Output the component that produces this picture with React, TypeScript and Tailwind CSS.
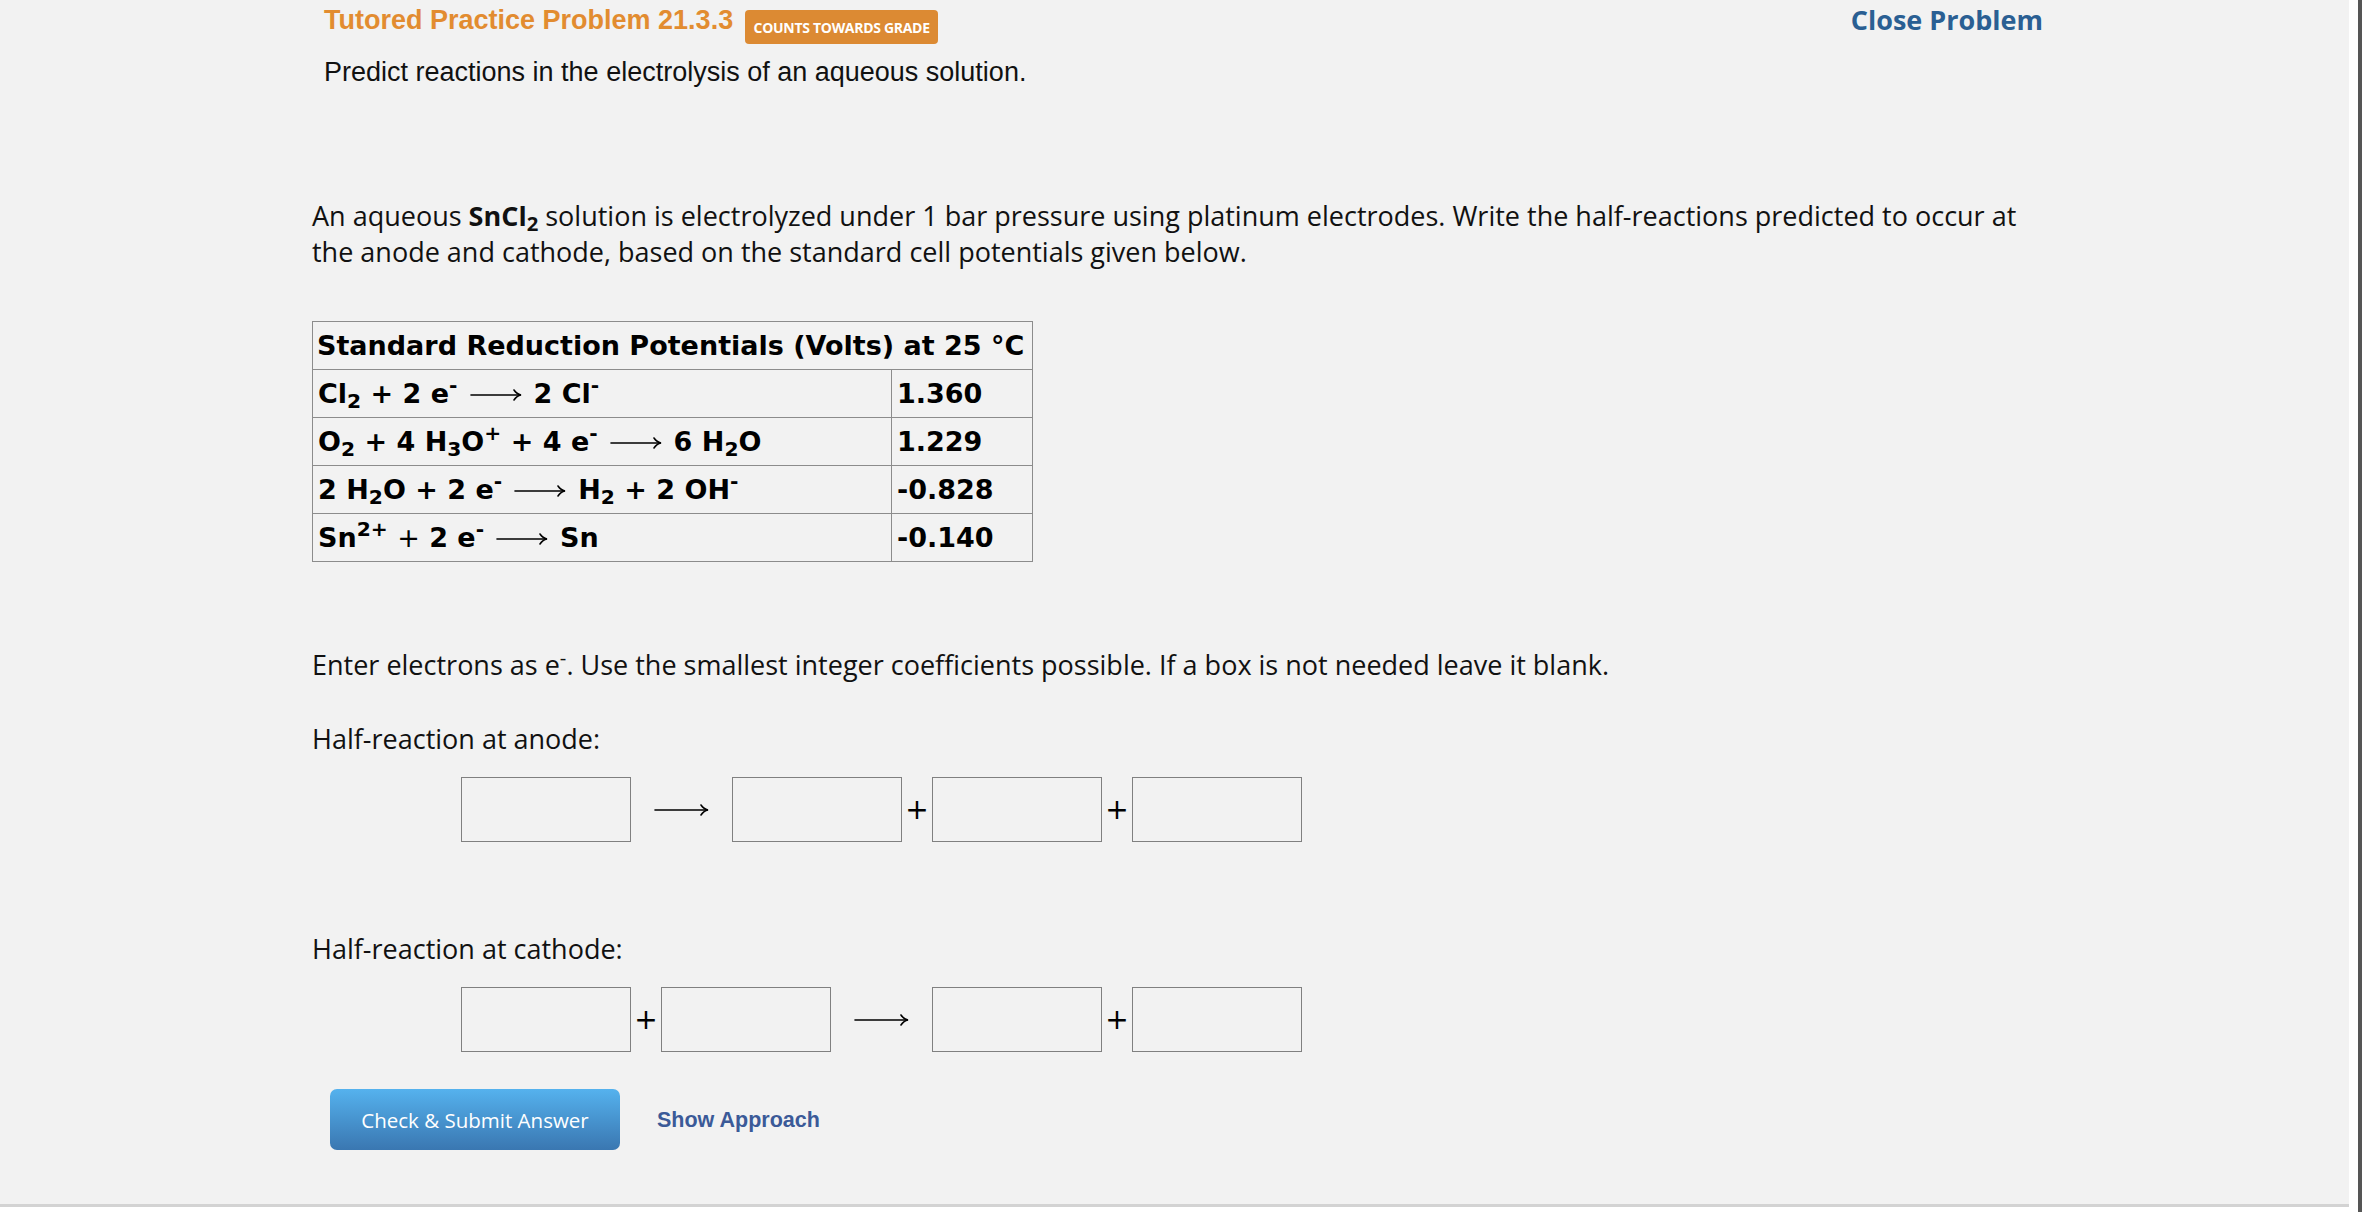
const ArrowSvg = ({ w }: { w: number }) => (
  <svg
    width={w}
    height={14}
    viewBox={`0 0 ${w} 14`}
    className="inline-block align-middle"
    fill="none"
    stroke="#000"
    strokeWidth={1.6}
    strokeLinecap="round"
  >
    <path d={`M1 7 H${w - 2}`} />
    <path d={`M${w - 8} 2 C${w - 6} 5 ${w - 4} 6.4 ${w - 1} 7 C${w - 4} 7.6 ${w - 6} 9 ${w - 8} 12`} />
  </svg>
);

const Arrow = () => (
  <span className="ml-[12px] mr-[12px]">
    <ArrowSvg w={52} />
  </span>
);

const rows = [
  {
    eq: (
      <>
        Cl<sub>2</sub> + 2 e<sup>-</sup>
        <Arrow />2 Cl<sup>-</sup>
      </>
    ),
    v: "1.360",
  },
  {
    eq: (
      <>
        O<sub>2</sub> + 4 H<sub>3</sub>O<sup>+</sup> + 4 e<sup>-</sup>
        <Arrow />6 H<sub>2</sub>O
      </>
    ),
    v: "1.229",
  },
  {
    eq: (
      <>
        2 H<sub>2</sub>O + 2 e<sup>-</sup>
        <Arrow />H<sub>2</sub> + 2 OH<sup>-</sup>
      </>
    ),
    v: "-0.828",
  },
  {
    eq: (
      <>
        Sn<sup>2+</sup> <span className="font-normal">+</span> 2 e<sup>-</sup>
        <Arrow />Sn
      </>
    ),
    v: "-0.140",
  },
];

const Box = () => (
  <input
    type="text"
    className="w-[170px] h-[65px] border border-[#808080] bg-[#f2f2f2] outline-none"
  />
);

const Plus = () => (
  <span className="w-[30px] text-center text-[28px] leading-none text-black [font-family:'DejaVu_Sans',sans-serif]">
    +
  </span>
);

const Yields = () => (
  <span className="w-[101px] flex justify-center">
    <ArrowSvg w={55} />
  </span>
);

const App = () => {
  return (
    <div className="w-[2362px] h-[1212px] flex bg-white overflow-hidden">
      <div className="w-[2349px] h-full flex flex-col">
        <div className="h-[1207px] bg-[#f2f2f2] border-b-[3px] border-[#d3d3d3] pl-[312px]">
          <div className="w-[1740px]">
            <div className="flex items-start pl-[12px] pr-[9px]">
              <h1 className="mt-[5px] text-[27px] leading-[31px] font-bold text-[#e28c30] [font-family:'Liberation_Sans',Arial,sans-serif]">
                Tutored Practice Problem 21.3.3
              </h1>
              <span className="ml-[12px] mt-[10px] h-[34px] w-[193px] flex items-center justify-center rounded-[4px] bg-[#dc8a33] text-white text-[14px] font-bold tracking-[-0.3px] [font-family:'Open_Sans',sans-serif]">
                COUNTS TOWARDS GRADE
              </span>
              <a className="ml-auto mt-[1px] text-[27px] leading-[37px] font-bold text-[#2a5f93] [font-family:'Open_Sans',sans-serif]">
                Close Problem
              </a>
            </div>
            <p className="pl-[12px] mt-[13px] text-[27px] leading-[31px] text-[#111] [font-family:'Liberation_Sans',Arial,sans-serif]">
              Predict reactions in the electrolysis of an aqueous solution.
            </p>

            <div className="[font-family:'Open_Sans',sans-serif] text-[27px] leading-[36px] text-[#111]">
              <p className="mt-[110px] w-[1730px]">
                An aqueous <b>SnCl<sub>2</sub></b> solution is electrolyzed under 1 bar pressure using
                platinum electrodes. Write the half-reactions predicted to occur at the anode and
                cathode, based on the standard cell potentials given below.
              </p>

              <table className="mt-[51px] border-collapse table-fixed w-[720px] text-black font-bold text-[27px] leading-[30px] [font-family:'DejaVu_Sans',Verdana,sans-serif]">
                <colgroup>
                  <col className="w-[579px]" />
                  <col className="w-[141px]" />
                </colgroup>
                <thead>
                  <tr className="h-[48px]">
                    <th
                      colSpan={2}
                      className="border border-[#8c8c8c] text-left pl-[4px] whitespace-nowrap"
                    >
                      Standard Reduction Potentials (Volts) at 25 °C
                    </th>
                  </tr>
                </thead>
                <tbody>
                  {rows.map((r, i) => (
                    <tr key={i} className="h-[48px]">
                      <td className="border border-[#8c8c8c] pl-[5px] whitespace-nowrap">
                        {r.eq}
                      </td>
                      <td className="border border-[#8c8c8c] pl-[5px]">{r.v}</td>
                    </tr>
                  ))}
                </tbody>
              </table>

              <p className="mt-[85px]">
                Enter electrons as e<sup>-</sup>. Use the smallest integer coefficients possible. If a
                box is not needed leave it blank.
              </p>

              <p className="mt-[38px]">Half-reaction at anode:</p>
              <div className="mt-[20px] ml-[149px] flex items-center">
                <Box />
                <Yields />
                <Box />
                <Plus />
                <Box />
                <Plus />
                <Box />
              </div>

              <p className="mt-[89px]">Half-reaction at cathode:</p>
              <div className="mt-[20px] ml-[149px] flex items-center">
                <Box />
                <Plus />
                <Box />
                <Yields />
                <Box />
                <Plus />
                <Box />
              </div>

              <div className="mt-[37px] ml-[18px] flex items-center">
                <button className="w-[290px] h-[61px] rounded-[7px] bg-gradient-to-b from-[#55b2ee] to-[#3a77b1] text-white text-[20.5px] [font-family:'Open_Sans',sans-serif]">
                  Check &amp; Submit Answer
                </button>
                <a className="ml-[37px] text-[21.5px] font-bold text-[#3b5a98] [font-family:'Liberation_Sans',Arial,sans-serif]">
                  Show Approach
                </a>
              </div>
            </div>
          </div>
        </div>
        <div className="flex-1 bg-white" />
      </div>
      <div className="w-[9px] bg-white" />
      <div className="flex-1 bg-[#555555]" />
    </div>
  );
};

export default App;
